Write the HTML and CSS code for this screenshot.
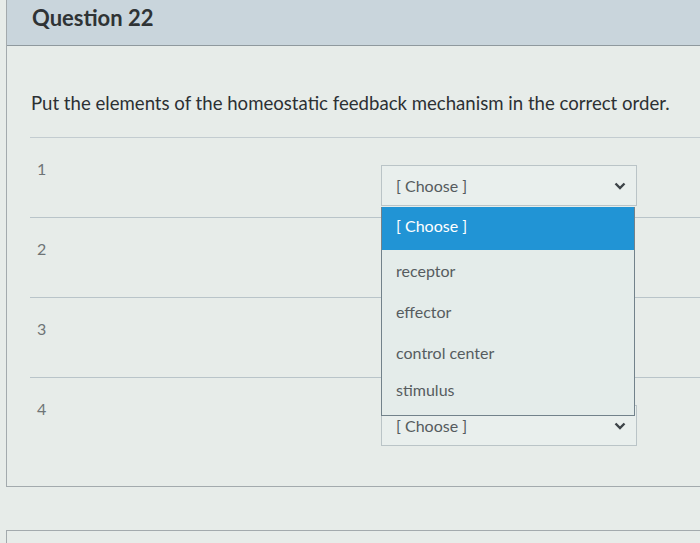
FILE: index.html
```html
<!DOCTYPE html>
<html>
<head>
<meta charset="utf-8">
<link rel="stylesheet" href="styles.css">
</head>
<body>
<div class="card">
  <div class="header">Question 22</div>
  <div class="body">
    <p class="prompt">Put the elements of the homeostatic feedback mechanism in the correct order.</p>
    <div class="answers">
      <div class="row">
        <span class="num">1</span>
        <div class="select-wrap">
          <div class="select"><span>[ Choose ]</span><svg class="chev" viewBox="0 0 12 8" width="12" height="8"><path d="M1.5 1.5 L6 6 L10.5 1.5" fill="none" stroke="#3d4448" stroke-width="2.4"/></svg></div>
          <ul class="menu">
            <li class="active">[ Choose ]</li>
            <li>receptor</li>
            <li>effector</li>
            <li>control center</li>
            <li>stimulus</li>
          </ul>
        </div>
      </div>
      <div class="row">
        <span class="num">2</span>
      </div>
      <div class="row">
        <span class="num">3</span>
      </div>
      <div class="row last">
        <span class="num">4</span>
        <div class="select-wrap">
          <div class="select"><span>[ Choose ]</span><svg class="chev" viewBox="0 0 12 8" width="12" height="8"><path d="M1.5 1.5 L6 6 L10.5 1.5" fill="none" stroke="#3d4448" stroke-width="2.4"/></svg></div>
        </div>
      </div>
    </div>
  </div>
</div>
<div class="next-card"></div>
</body>
</html>
```
FILE: styles.css
```css
html, body {
  margin: 0;
  padding: 0;
}
body {
  background: #e7ece9;
  font-family: Lato, "Liberation Sans", sans-serif;
  width: 700px;
  height: 543px;
  overflow: hidden;
}
.card {
  margin-left: 6px;
  border-left: 1px solid #a3aaad;
  border-bottom: 1px solid #a3aaad;
  height: 487px;
  box-sizing: border-box;
}
.header {
  height: 46px;
  box-sizing: border-box;
  background: #c9d5dc;
  border-bottom: 1px solid #8f999e;
  padding-left: 25px;
  line-height: 36px;
  font-size: 22px;
  font-weight: 700;
  color: #2f3335;
}
.body {
  padding-left: 23px;
}
.prompt {
  margin: 0;
  padding-top: 45px;
  padding-left: 1px;
  font-size: 18.6px;
  line-height: 24px;
  color: #2c3033;
  height: 92px;
  box-sizing: border-box;
  border-bottom: 1px solid #c3ccd0;
}
.answers {
  display: flex;
  flex-direction: column;
}
.row {
  height: 80px;
  box-sizing: border-box;
  border-bottom: 1px solid #b9c4c9;
  display: flex;
  align-items: flex-start;
  justify-content: space-between;
  padding-left: 7px;
  padding-right: 63px;
}
.row.last {
  border-bottom: none;
}
.num {
  margin-top: 20px;
  font-size: 16px;
  line-height: 22px;
  color: #6f7476;
}
.select-wrap {
  position: relative;
  margin-top: 27px;
  width: 256px;
}
.select {
  height: 41px;
  box-sizing: border-box;
  border: 1px solid #bac4c7;
  background: #e9efed;
  display: flex;
  align-items: center;
  justify-content: space-between;
  padding: 0 10px 0 14px;
  font-size: 16px;
  color: #555b5e;
}
.chev {
  display: block;
}
.menu {
  position: absolute;
  top: 42px;
  left: 0;
  width: 254px;
  margin: 0;
  padding: 0;
  list-style: none;
  background: #e4ecea;
  border: 1px solid #72828b;
  border-top: none;
  box-sizing: border-box;
  z-index: 2;
}
.menu li {
  height: 41px;
  line-height: 41px;
  padding-left: 14px;
  font-size: 16px;
  color: #565c5f;
}
.menu li.active {
  height: 43px;
  line-height: 38px;
  background: #2194d5;
  color: #ffffff;
}
.menu li:last-child {
  height: 42px;
  line-height: 34px;
}
.next-card {
  margin-top: 43px;
  margin-left: 6px;
  border-top: 1px solid #a3aaad;
  border-left: 1px solid #a3aaad;
  height: 20px;
}
```
